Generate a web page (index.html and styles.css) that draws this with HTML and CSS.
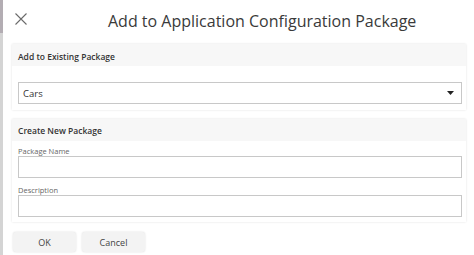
FILE: index.html
```html
<!DOCTYPE html>
<html>
<head>
<meta charset="utf-8">
<link rel="stylesheet" href="styles.css">
</head>
<body>
<div class="page">
  <div class="backdrop"><div class="bd-top"></div><div class="bd-bottom"></div></div>
  <div class="dialog">
    <div class="titlebar">
      <svg class="close" width="12" height="12" viewBox="0 0 12 12"><path d="M0.5 0.5 L11.5 11.5 M11.5 0.5 L0.5 11.5" stroke="#6a6a6a" stroke-width="1.1" fill="none"/></svg>
      <div class="title">Add to Application Configuration Package</div>
    </div>
    <div class="panel p1">
      <div class="phead">Add to Existing Package</div>
      <div class="pbody">
        <div class="select"><span>Cars</span><svg width="7" height="4" viewBox="0 0 7 4"><path d="M0 0 H7 L3.5 4 Z" fill="#222"/></svg></div>
      </div>
    </div>
    <div class="panel p2">
      <div class="phead">Create New Package</div>
      <div class="pbody">
        <div class="label first">Package Name</div>
        <div class="input"></div>
        <div class="label second">Description</div>
        <div class="input"></div>
      </div>
    </div>
    <div class="buttons">
      <div class="btn">OK</div>
      <div class="btn">Cancel</div>
    </div>
  </div>
</div>
</body>
</html>
```
FILE: styles.css
```css
html, body { margin: 0; padding: 0; background: #fff; }
body { font-family: "Open Sans", "Noto Sans", sans-serif; color: #333; width: 474px; height: 255px; overflow: hidden; }
.page { display: flex; height: 255px; }
.backdrop { width: 3px; display: flex; flex-direction: column; }
.bd-top { height: 33px; background: #b3adb3; }
.bd-bottom { flex: 1; background: #d4d4d4; }
.dialog { flex: 1; padding: 0 8px 0 9px; display: flex; flex-direction: column; }
.titlebar { height: 44px; position: relative; }
.close { position: absolute; left: 3px; top: 13px; }
.title { position: absolute; left: 96px; top: 9.5px; font-size: 16px; color: #3a3a3a; white-space: nowrap; }
.panel { box-shadow: 0 0 2px rgba(0,0,0,0.12); }
.phead { background: #f7f7f7; height: 22px; box-sizing: border-box; padding: 3px 0 0 6px; line-height: 19px; font-size: 8.5px; font-weight: 600; color: #333; }
.p2 .phead { padding-top: 2px; }
.pbody { padding: 16px 4px 6px 6px; }
.p2 { margin-top: 9px; }
.p2 .pbody { padding-top: 0; padding-bottom: 5px; }
.select { height: 22px; box-sizing: border-box; border: 1px solid #c8c8c8; display: flex; align-items: center; justify-content: space-between; padding: 0 7px 0 4px; font-size: 9.5px; color: #333; }
.label { font-size: 7.5px; color: #666; height: 10px; line-height: 10px; }
.label.first { margin-top: 5px; }
.label.second { margin-top: 7px; }
.input { height: 22px; box-sizing: border-box; border: 1px solid #c8c8c8; }
.buttons { display: flex; gap: 6px; margin-top: 10px; margin-left: 1px; }
.btn { width: 63px; height: 20px; border-radius: 3px; background: #f3f3f3; box-shadow: 0 0 2px rgba(0,0,0,0.15); font-size: 9px; color: #444; display: flex; align-items: center; justify-content: center; }
```
